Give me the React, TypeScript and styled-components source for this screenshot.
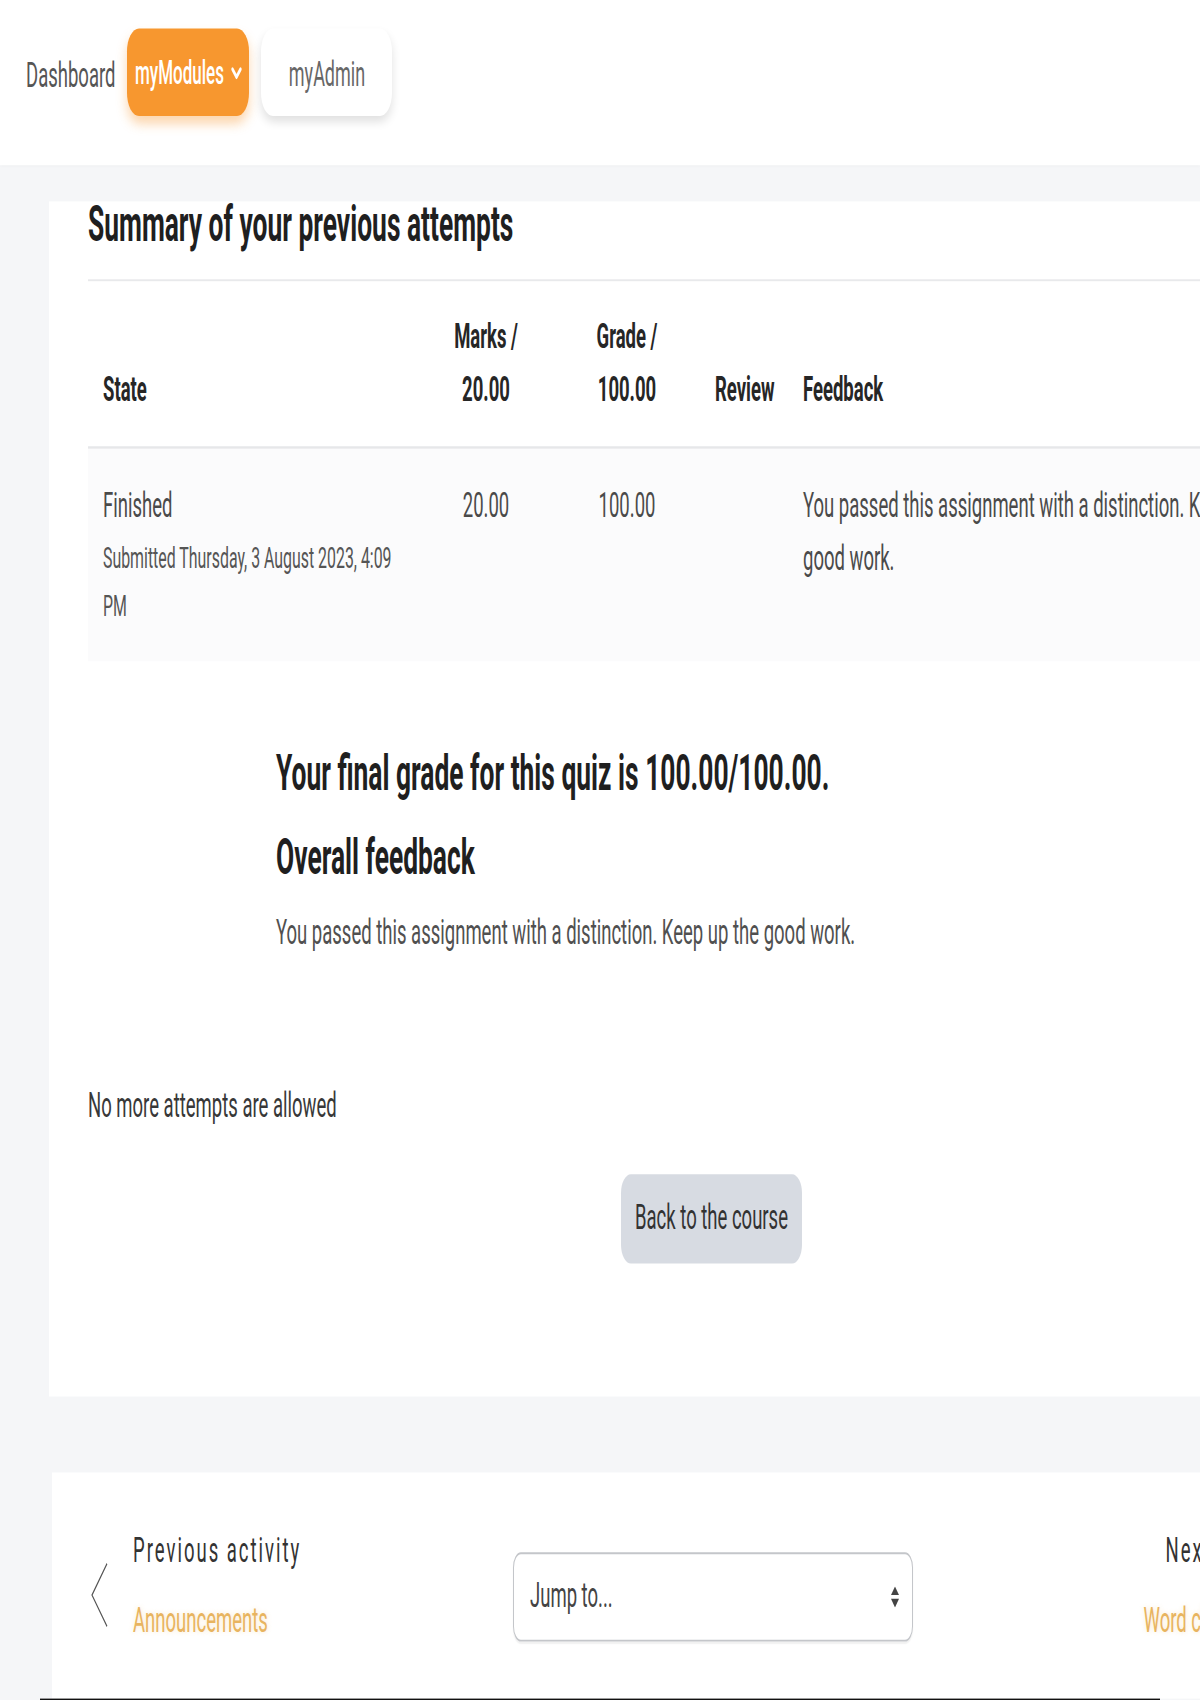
import React from "react";
import styled, { createGlobalStyle, css } from "styled-components";

/* The reference is a page captured with a strong vertical stretch; the whole
   page is laid out normally and then stretched by this factor. */
const SY = 1.9;
const VIEW_H = 1700 / SY;

const Global = createGlobalStyle`
  html { margin: 0; padding: 0; background: #f5f6f8; overflow: hidden; }
  body { margin: 0; padding: 0; min-height: 1700px; background: #f5f6f8; font-family: Roboto, "Liberation Sans", Arial, sans-serif; color: #444; }
  * { box-sizing: border-box; }
`;

const Stage = styled.div`
  width: 1200px;
  height: ${VIEW_H}px;
  overflow: hidden;
  background: #f5f6f8;
  transform: scaleY(${SY});
  transform-origin: 0 0;
`;

/* ---------- top navigation ---------- */
const TopBar = styled.header`
  height: 86.8px;
  background: #fff;
  display: flex;
  align-items: flex-start;
  gap: 12px;
  padding: 15.3px 0 0 26px;
  box-shadow: 0 1px 2px rgba(0, 0, 0, 0.03);
`;

const NavText = styled.span`
  font-size: 18.5px;
  line-height: 45.8px;
  margin-top: 3px;
  color: #555;
`;

const NavButton = styled.button<{ $active?: boolean }>`
  height: 45.8px;
  border: none;
  border-radius: 12px;
  display: inline-flex;
  align-items: center;
  justify-content: center;
  gap: 7px;
  font-family: inherit;
  cursor: pointer;
  ${(p) =>
    p.$active
      ? css`
          width: 122px;
          background: #f7972f;
          color: #fff;
          font-size: 17px;
          font-weight: 500;
          box-shadow: 0 4px 8px rgba(247, 151, 47, 0.38);
        `
      : css`
          width: 131px;
          background: #fff;
          color: #676767;
          font-size: 18px;
          font-weight: 400;
          box-shadow: 0 3px 7px rgba(0, 0, 0, 0.12);
        `}
`;

/* ---------- main card ---------- */
const Main = styled.main`
  padding-left: 49px;
`;

const Card = styled.section`
  margin-top: 19.5px;
  width: 1325px;
  background: #fff;
  padding: 0 39px 69.5px;
`;

const PageHeading = styled.h2`
  margin: 0;
  font-size: 26.4px;
  line-height: 0.95;
  font-weight: 700;
  color: #1f1f1f;
`;

const Table = styled.table`
  width: 100%;
  margin-top: 15.4px;
  border-collapse: collapse;
  table-layout: fixed;
  border-top: 1px solid #e8e9eb;
  font-size: 18.5px;
  line-height: 1.5;
`;

const Th = styled.th<{ $center?: boolean }>`
  padding: 16px 15px;
  text-align: ${(p) => (p.$center ? "center" : "left")};
  vertical-align: bottom;
  font-weight: 700;
  color: #262626;
  border-bottom: 1px solid #e6e7e9;
`;

const Td = styled.td<{ $center?: boolean }>`
  padding: 17px 15px 16px;
  text-align: ${(p) => (p.$center ? "center" : "left")};
  vertical-align: top;
  font-weight: 400;
  color: #4a4a4a;
`;

const DataRow = styled.tr`
  background: #fbfbfc;
`;

const StateDetails = styled.span`
  display: block;
  font-size: 15.9px;
  line-height: 1.6;
  color: #555;
`;

const GradeBox = styled.div`
  width: 871px;
  margin: 44px auto 0;
`;

const GradeTitle = styled.h3<{ $spaced?: boolean }>`
  margin: ${(p) => (p.$spaced ? "12px" : "0")} 0 0;
  font-size: 26.4px;
  line-height: 1.2;
  font-weight: 700;
  color: #1f1f1f;
`;

const FeedbackText = styled.p`
  margin: 10.7px 0 0;
  font-size: 18.5px;
  line-height: 1.5;
  color: #505050;
`;

const Notice = styled.p`
  margin: 63.3px 0 0;
  font-size: 18.5px;
  line-height: 1.5;
  color: #383838;
`;

const ButtonRow = styled.div`
  margin-top: 21.4px;
  display: flex;
  justify-content: center;
`;

const BackButton = styled.button`
  height: 47.3px;
  padding: 0 14.5px 2px;
  border: none;
  border-radius: 10px;
  background: #d7dbe2;
  color: #333;
  font-family: inherit;
  font-size: 18.5px;
  cursor: pointer;
`;

/* ---------- activity navigation ---------- */
const NavCard = styled.nav`
  margin: 40.5px 0 0 3px;
  width: 1322px;
  background: #fff;
  padding: 27.3px 39px 25.6px;
  display: grid;
  grid-template-columns: 1fr 400px 1fr;
  align-items: start;
`;

const ActivityLink = styled.div<{ $next?: boolean }>`
  display: flex;
  align-items: flex-start;
  gap: 25px;
  justify-self: ${(p) => (p.$next ? "end" : "start")};
  text-align: ${(p) => (p.$next ? "right" : "left")};
`;

const Chevron = styled.svg`
  flex: none;
  margin-top: 19.6px;
`;

const ActivityText = styled.div`
  display: flex;
  flex-direction: column;
  font-size: 18.5px;
  line-height: 1.5;
`;

const ActivityLabel = styled.span`
  color: #333;
  letter-spacing: 2px;
`;

const ActivityName = styled.a`
  margin-top: 10px;
  color: #e8b45f;
  text-decoration: none;
  text-shadow: 0 0 4px rgba(240, 180, 80, 0.3);
  white-space: nowrap;
`;

const JumpSelect = styled.div`
  margin-top: 13.8px;
  height: 47.4px;
  border: 1px solid #c4c6ca;
  border-radius: 8px;
  padding: 0 13px 0 16px;
  display: flex;
  align-items: center;
  justify-content: space-between;
  font-size: 18.5px;
  color: #444;
  box-shadow: 0 1px 1px rgba(0, 0, 0, 0.06);
`;

const BottomBar = styled.div`
  margin-left: -9px;
  width: 1120px;
  height: 1.6px;
  background: #111;
`;

const ChevronLeft = () => (
  <Chevron width="17" height="35" viewBox="0 0 17 35">
    <polyline points="16,1 1,17.5 16,34" fill="none" stroke="#555" strokeWidth="1" />
  </Chevron>
);

const ChevronRight = () => (
  <Chevron width="17" height="35" viewBox="0 0 17 35">
    <polyline points="1,1 16,17.5 1,34" fill="none" stroke="#555" strokeWidth="1" />
  </Chevron>
);

const CaretDown = () => (
  <svg width="11" height="7" viewBox="0 0 11 7">
    <polyline points="1.5,1.5 5.5,5.5 9.5,1.5" fill="none" stroke="#fff" strokeWidth="2.2" strokeLinecap="round" strokeLinejoin="round" />
  </svg>
);

const SelectArrows = () => (
  <svg width="8" height="11" viewBox="0 0 8 11">
    <polygon points="0,4.5 4,0 8,4.5" fill="#444" />
    <polygon points="0,6.5 4,11 8,6.5" fill="#444" />
  </svg>
);

export default function App() {
  return (
    <>
      <Global />
      <Stage>
        <TopBar>
          <NavText>Dashboard</NavText>
          <NavButton $active>
            myModules
            <CaretDown />
          </NavButton>
          <NavButton>myAdmin</NavButton>
        </TopBar>

        <Main>
          <Card>
            <PageHeading>Summary of your previous attempts</PageHeading>
            <Table>
              <colgroup>
                <col style={{ width: 330 }} />
                <col style={{ width: 136 }} />
                <col style={{ width: 146 }} />
                <col style={{ width: 88 }} />
                <col />
              </colgroup>
              <thead>
                <tr>
                  <Th>State</Th>
                  <Th $center>Marks / 20.00</Th>
                  <Th $center>Grade / 100.00</Th>
                  <Th $center>Review</Th>
                  <Th>Feedback</Th>
                </tr>
              </thead>
              <tbody>
                <DataRow>
                  <Td>
                    Finished
                    <StateDetails>Submitted Thursday, 3 August 2023, 4:09 PM</StateDetails>
                  </Td>
                  <Td $center>20.00</Td>
                  <Td $center>100.00</Td>
                  <Td $center></Td>
                  <Td>You passed this assignment with a distinction. Keep up the good work.</Td>
                </DataRow>
              </tbody>
            </Table>

            <GradeBox>
              <GradeTitle>Your final grade for this quiz is 100.00/100.00.</GradeTitle>
              <GradeTitle $spaced>Overall feedback</GradeTitle>
              <FeedbackText>You passed this assignment with a distinction. Keep up the good work.</FeedbackText>
            </GradeBox>

            <Notice>No more attempts are allowed</Notice>
            <ButtonRow>
              <BackButton>Back to the course</BackButton>
            </ButtonRow>
          </Card>

          <NavCard>
            <ActivityLink>
              <ChevronLeft />
              <ActivityText>
                <ActivityLabel>Previous activity</ActivityLabel>
                <ActivityName href="#">Announcements</ActivityName>
              </ActivityText>
            </ActivityLink>
            <JumpSelect role="combobox">
              <span>Jump to...</span>
              <SelectArrows />
            </JumpSelect>
            <ActivityLink $next>
              <ActivityText>
                <ActivityLabel>Next activity</ActivityLabel>
                <ActivityName href="#">Word classes quiz</ActivityName>
              </ActivityText>
              <ChevronRight />
            </ActivityLink>
          </NavCard>
          <BottomBar />
        </Main>
      </Stage>
    </>
  );
}
